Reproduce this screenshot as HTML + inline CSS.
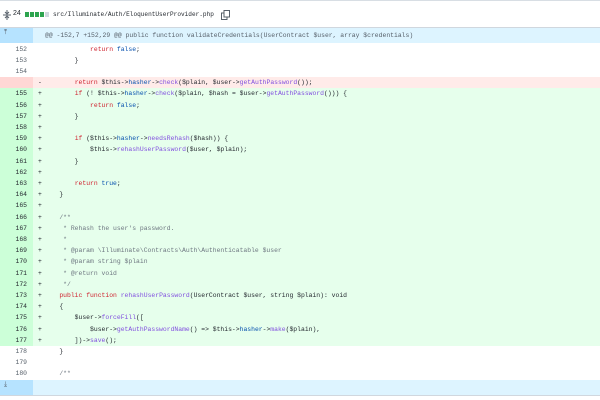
<!DOCTYPE html>
<html><head><meta charset="utf-8"><style>
body{margin:0;width:600px;height:400px;background:#fff;overflow:hidden;font-family:"Liberation Mono",monospace;}
.hdr{position:absolute;left:0;top:0;width:600px;height:28px;border-top:1px solid #d8dee4;border-bottom:1px solid #d0d7de;box-sizing:border-box;background:#fff;}
.row{position:absolute;left:0;width:600px;height:11.2px;font-size:6.4px;line-height:11.2px;white-space:pre;color:#24292f;}
.n{position:absolute;left:0;width:33px;height:100%;text-align:right;box-sizing:border-box;padding-right:6px;color:#57606a;}
.s{position:absolute;left:38px;}
.c{position:absolute;left:44px;}
.add{background:#e6ffec}.add .n{background:#ccffd8;color:#24292f}
.del{background:#ffebe9}.del .n{background:#ffd7d5}
.k{color:#cf222e}.f{color:#8250df}.p{color:#0550ae}.cm{color:#6e7781}
</style></head><body>
<div class="hdr">
<svg style="position:absolute;left:3px;top:9px" width="8" height="10" viewBox="0 0 8 10"><path d="M4 0v3M2 2l2 2 2-2M0 5h8M4 10V7M2 8l2-2 2 2" stroke="#57606a" fill="none" stroke-width="1"/></svg>
<span style="position:absolute;left:13px;top:9px;font-size:7px;color:#24292f;font-family:'Liberation Sans',sans-serif">24</span>
<span style="position:absolute;left:25px;top:11px;width:4px;height:5px;background:#2da44e"></span>
<span style="position:absolute;left:30px;top:11px;width:4px;height:5px;background:#2da44e"></span>
<span style="position:absolute;left:35px;top:11px;width:4px;height:5px;background:#2da44e"></span>
<span style="position:absolute;left:40px;top:11px;width:4px;height:5px;background:#2da44e"></span>
<span style="position:absolute;left:45px;top:11px;width:4px;height:5px;background:#d0d7de"></span>
<span style="position:absolute;left:53px;top:9px;font-size:6.1px;line-height:10px;color:#24292f">src/Illuminate/Auth/EloquentUserProvider.php</span>
<svg style="position:absolute;left:221px;top:9px" width="9" height="10" viewBox="0 0 9 10"><rect x="0.5" y="3" width="5.5" height="6.5" fill="none" stroke="#57606a"/><rect x="3" y="0.5" width="5.5" height="6.5" fill="#fff" stroke="#57606a"/></svg>
</div>
<div style="position:absolute;left:0;top:28px;width:600px;height:15px;background:#ddf4ff"></div>
<div style="position:absolute;left:0;top:28px;width:33px;height:15px;background:#b6e3ff"></div>
<span style="position:absolute;left:4px;top:29px;font-size:7px;color:#57606a;font-family:'Liberation Sans'">⤒</span>
<div class="row" style="top:30px;color:#57606a"><span class="c" style="left:45px">@@ -152,7 +152,29 @@ public function validateCredentials(UserContract $user, array $credentials)</span></div>

<div class="row" style="top:43.6px"><span class="n">152</span><span class="c">            <span class="k">return</span> <span class="p">false</span>;</span></div>
<div class="row" style="top:54.8px"><span class="n">153</span><span class="c">        }</span></div>
<div class="row" style="top:66px"><span class="n">154</span><span class="c"></span></div>
<div class="row del" style="top:77.2px"><span class="n"></span><span class="s">-</span><span class="c">        <span class="k">return</span> $this-&gt;<span class="p">hasher</span>-&gt;<span class="f">check</span>($plain, $user-&gt;<span class="f">getAuthPassword</span>());</span></div>
<div class="row add" style="top:88.4px"><span class="n">155</span><span class="s">+</span><span class="c">        <span class="k">if</span> (! $this-&gt;<span class="p">hasher</span>-&gt;<span class="f">check</span>($plain, $hash = $user-&gt;<span class="f">getAuthPassword</span>())) {</span></div>
<div class="row add" style="top:99.6px"><span class="n">156</span><span class="s">+</span><span class="c">            <span class="k">return</span> <span class="p">false</span>;</span></div>
<div class="row add" style="top:110.8px"><span class="n">157</span><span class="s">+</span><span class="c">        }</span></div>
<div class="row add" style="top:122px"><span class="n">158</span><span class="s">+</span><span class="c"></span></div>
<div class="row add" style="top:133.2px"><span class="n">159</span><span class="s">+</span><span class="c">        <span class="k">if</span> ($this-&gt;<span class="p">hasher</span>-&gt;<span class="f">needsRehash</span>($hash)) {</span></div>
<div class="row add" style="top:144.4px"><span class="n">160</span><span class="s">+</span><span class="c">            $this-&gt;<span class="f">rehashUserPassword</span>($user, $plain);</span></div>
<div class="row add" style="top:155.6px"><span class="n">161</span><span class="s">+</span><span class="c">        }</span></div>
<div class="row add" style="top:166.8px"><span class="n">162</span><span class="s">+</span><span class="c"></span></div>
<div class="row add" style="top:178px"><span class="n">163</span><span class="s">+</span><span class="c">        <span class="k">return</span> <span class="p">true</span>;</span></div>
<div class="row add" style="top:189.2px"><span class="n">164</span><span class="s">+</span><span class="c">    }</span></div>
<div class="row add" style="top:200.4px"><span class="n">165</span><span class="s">+</span><span class="c"></span></div>
<div class="row add" style="top:211.6px"><span class="n">166</span><span class="s">+</span><span class="c cm">    /**</span></div>
<div class="row add" style="top:222.8px"><span class="n">167</span><span class="s">+</span><span class="c cm">     * Rehash the user's password.</span></div>
<div class="row add" style="top:234px"><span class="n">168</span><span class="s">+</span><span class="c cm">     *</span></div>
<div class="row add" style="top:245.2px"><span class="n">169</span><span class="s">+</span><span class="c cm">     * @param \Illuminate\Contracts\Auth\Authenticatable $user</span></div>
<div class="row add" style="top:256.4px"><span class="n">170</span><span class="s">+</span><span class="c cm">     * @param string $plain</span></div>
<div class="row add" style="top:267.6px"><span class="n">171</span><span class="s">+</span><span class="c cm">     * @return void</span></div>
<div class="row add" style="top:278.8px"><span class="n">172</span><span class="s">+</span><span class="c cm">     */</span></div>
<div class="row add" style="top:290px"><span class="n">173</span><span class="s">+</span><span class="c">    <span class="k">public function</span> <span class="f">rehashUserPassword</span>(UserContract $user, string $plain): void</span></div>
<div class="row add" style="top:301.2px"><span class="n">174</span><span class="s">+</span><span class="c">    {</span></div>
<div class="row add" style="top:312.4px"><span class="n">175</span><span class="s">+</span><span class="c">        $user-&gt;<span class="f">forceFill</span>([</span></div>
<div class="row add" style="top:323.6px"><span class="n">176</span><span class="s">+</span><span class="c">            $user-&gt;<span class="f">getAuthPasswordName</span>() =&gt; $this-&gt;<span class="p">hasher</span>-&gt;<span class="f">make</span>($plain),</span></div>
<div class="row add" style="top:334.8px"><span class="n">177</span><span class="s">+</span><span class="c">        ])-&gt;<span class="f">save</span>();</span></div>
<div class="row" style="top:346px"><span class="n">178</span><span class="c">    }</span></div>
<div class="row" style="top:357.2px"><span class="n">179</span><span class="c"></span></div>
<div class="row" style="top:368.4px"><span class="n">180</span><span class="c cm">    /**</span></div>
<div style="position:absolute;left:0;top:380px;width:600px;height:15px;background:#ddf4ff;border-bottom:1px solid #d0d7de"></div>
<div style="position:absolute;left:0;top:380px;width:33px;height:15px;background:#b6e3ff"></div>
<span style="position:absolute;left:4px;top:381px;font-size:7px;color:#57606a;font-family:'Liberation Sans'">⤓</span>
</body></html>
